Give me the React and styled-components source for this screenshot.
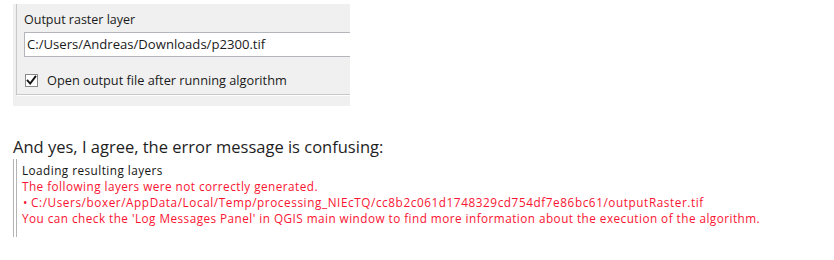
import React from "react";
import styled, { createGlobalStyle } from "styled-components";

const GlobalStyle = createGlobalStyle`
  html, body {
    margin: 0;
    padding: 0;
    background: #ffffff;
  }
  body {
    font-family: "Open Sans", "Noto Sans", sans-serif;
    width: 834px;
    height: 260px;
    overflow: hidden;
  }
`;

const log = {
  title: "Loading resulting layers",
  error: "The following layers were not correctly generated.",
  path: "C:/Users/boxer/AppData/Local/Temp/processing_NIEcTQ/cc8b2c061d1748329cd754df7e86bc61/outputRaster.tif",
  hint: "You can check the 'Log Messages Panel' in QGIS main window to find more information about the execution of the algorithm.",
};

function CheckMark() {
  return (
    <svg width="11" height="11" viewBox="0 0 11 11">
      <path d="M1.6 5.6 L4.2 8.6 L9.4 1.6" fill="none" stroke="#111" strokeWidth="1.9" strokeLinecap="square" />
    </svg>
  );
}

function App() {
  return (
    <Page>
      <GlobalStyle />
      <Panel>
        <GroupBox>
          <FieldLabel>Output raster layer</FieldLabel>
          <PathInput>C:/Users/Andreas/Downloads/p2300.tif</PathInput>
          <CheckRow>
            <CheckBox>
              <CheckMark />
            </CheckBox>
            <span>Open output file after running algorithm</span>
          </CheckRow>
        </GroupBox>
      </Panel>

      <Sentence>And yes, I agree, the error message is confusing:</Sentence>

      <LogBox>
        <LogLine>{log.title}</LogLine>
        <LogLine $error>{log.error}</LogLine>
        <LogLine $error $spread>
          <Bullet>•</Bullet>
          {log.path}
        </LogLine>
        <LogLine $error>{log.hint}</LogLine>
      </LogBox>
    </Page>
  );
}

export default App;

const Page = styled.div`
  display: flex;
  flex-direction: column;
  align-items: flex-start;
  padding-top: 4px;
`;

const Panel = styled.div`
  margin-left: 13px;
  width: 337px;
  height: 102px;
  background: #f0f0f0;
  overflow: hidden;
`;

const GroupBox = styled.div`
  display: flex;
  flex-direction: column;
  align-items: flex-start;
  margin-left: 3px;
  width: 380px;
  height: 91px;
  border-left: 1px solid #c8c8c8;
  border-bottom: 1px solid #c8c8c8;
  box-shadow: 1px 1px 0 #ffffff;
  padding-left: 7px;
  box-sizing: border-box;
`;

const FieldLabel = styled.div`
  margin-top: 7px;
  font-size: 12.5px;
  line-height: 17px;
  color: #1a1a1a;
`;

const PathInput = styled.div`
  margin-top: 4px;
  width: 380px;
  height: 25px;
  box-sizing: border-box;
  background: #ffffff;
  border: 1px solid #b2b5ba;
  padding-left: 2px;
  font-size: 13.1px;
  line-height: 23px;
  color: #1a1a1a;
`;

const CheckRow = styled.div`
  display: flex;
  align-items: center;
  gap: 9px;
  margin-top: 16px;
  margin-left: 1px;
  font-size: 12.75px;
  line-height: 14px;
  color: #1a1a1a;
`;

const CheckBox = styled.div`
  display: flex;
  align-items: center;
  justify-content: center;
  width: 13px;
  height: 13px;
  box-sizing: border-box;
  background: #ffffff;
  border: 1px solid #8a8a8a;
`;

const Sentence = styled.div`
  margin-top: 30px;
  margin-left: 13px;
  font-size: 16.5px;
  line-height: 22px;
  color: #1e1e1e;
`;

const LogBox = styled.div`
  display: flex;
  flex-direction: column;
  margin-top: 1px;
  margin-left: 13px;
  padding: 3px 0 11px 5px;
  border-left: 4px double #b4b4b4;
  font-size: 11.75px;
  line-height: 16px;
`;

const LogLine = styled.div`
  white-space: nowrap;
  color: ${(p) => (p.$error ? "#fb1432" : "#141414")};
  letter-spacing: ${(p) => (p.$spread ? "0.58px" : "0.46px")};
`;

const Bullet = styled.span`
  margin: 0 3px 0 1px;
`;
